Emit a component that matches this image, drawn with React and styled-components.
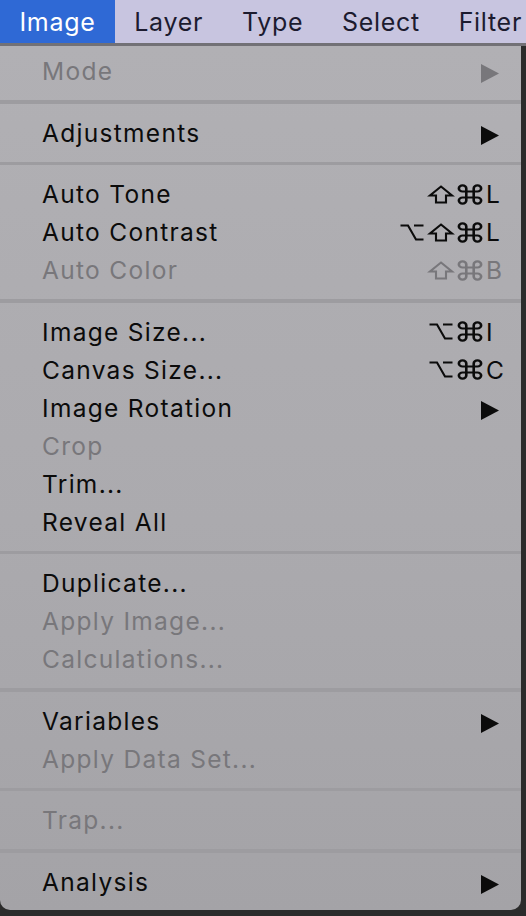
import React from 'react';
import styled, { createGlobalStyle } from 'styled-components';

const GlobalStyle = createGlobalStyle`
  html, body {
    margin: 0;
    padding: 0;
    background: #2b2b2b;
  }
  body {
    font-family: "Inter", "Liberation Sans", "DejaVu Sans", sans-serif;
    -webkit-font-smoothing: antialiased;
  }
`;

const Screen = styled.div`
  width: 526px;
  height: 916px;
  overflow: hidden;
  background: #2b2b2b;
  display: flex;
  flex-direction: column;
`;

const MenuBar = styled.div`
  height: 43px;
  flex: 0 0 auto;
  display: flex;
  align-items: stretch;
  background: #c8c5e0;
  border-bottom: 3px solid #727176;
  white-space: nowrap;
  overflow: hidden;
`;

const MenuTitle = styled.div`
  display: flex;
  align-items: center;
  padding: 0 19.4px;
  font-size: 25px;
  letter-spacing: 0.7px;
  color: ${p => (p.$active ? '#ffffff' : '#1c1b2f')};
  background: ${p => (p.$active ? '#2f69d5' : 'transparent')};
`;

const Panel = styled.div`
  width: 521px;
  padding: 6px 0 9px;
  background: linear-gradient(180deg, #b1b0b4 0%, #abaaae 55%, #a4a3a7 100%);
  border-radius: 0 0 10px 10px;
  box-sizing: border-box;
`;

const Row = styled.div`
  height: 38px;
  display: flex;
  align-items: center;
  padding: 0 18px 0 42px;
  font-size: 24.5px;
  letter-spacing: 1.3px;
  color: ${p => (p.$disabled ? '#78777b' : '#0b0b0b')};
`;

const Label = styled.span`
  flex: 1;
`;

const Shortcut = styled.span`
  display: flex;
  align-items: center;
  gap: 5px;
`;

const ModIcon = styled.svg`
  width: 24px;
  height: 19px;
  fill: none;
  stroke: currentColor;
  stroke-width: 2.1;
  stroke-linejoin: miter;
  overflow: visible;
`;

const Key = styled.span`
  width: 17px;
  margin-left: -1px;
  font-size: 24.5px;
  letter-spacing: 0;
`;

const Arrow = styled.svg`
  width: 18px;
  height: 19px;
  margin-right: 4px;
  margin-top: 5px;
  fill: currentColor;
`;

const Separator = styled.div`
  height: 3.5px;
  margin: 10px 0;
  background: #9d9ca0;
`;

const Option = () => (
  <ModIcon viewBox="0 0 24 18">
    <path d="M0.5 2 H8 L16 16 H23.5 M14 2 H23.5" />
  </ModIcon>
);

const Shift = () => (
  <ModIcon viewBox="0 0 24 18">
    <path d="M12 1 L23 10 H17 V17 H7 V10 H1 Z" />
  </ModIcon>
);

const Command = () => (
  <ModIcon viewBox="2.3 2.6 19.4 18.8" preserveAspectRatio="none">
    <path d="M15 6v12a3 3 0 1 0 3-3H6a3 3 0 1 0 3 3V6a3 3 0 1 0-3 3h12a3 3 0 1 0-3-3" />
  </ModIcon>
);

const modIcons = { opt: Option, shift: Shift, cmd: Command };

const items = [
  { label: 'Mode', disabled: true, sub: true },
  '-',
  { label: 'Adjustments', sub: true },
  '-',
  { label: 'Auto Tone', mods: ['shift', 'cmd'], key: 'L' },
  { label: 'Auto Contrast', mods: ['opt', 'shift', 'cmd'], key: 'L' },
  { label: 'Auto Color', mods: ['shift', 'cmd'], key: 'B', disabled: true },
  '-',
  { label: 'Image Size...', mods: ['opt', 'cmd'], key: 'I' },
  { label: 'Canvas Size...', mods: ['opt', 'cmd'], key: 'C' },
  { label: 'Image Rotation', sub: true },
  { label: 'Crop', disabled: true },
  { label: 'Trim...' },
  { label: 'Reveal All' },
  '-',
  { label: 'Duplicate...' },
  { label: 'Apply Image...', disabled: true },
  { label: 'Calculations...', disabled: true },
  '-',
  { label: 'Variables', sub: true },
  { label: 'Apply Data Set...', disabled: true },
  '-',
  { label: 'Trap...', disabled: true },
  '-',
  { label: 'Analysis', sub: true },
];

const titles = ['Image', 'Layer', 'Type', 'Select', 'Filter'];

const MenuItem = ({ item }) => (
  <Row $disabled={item.disabled}>
    <Label>{item.label}</Label>
    {item.key && (
      <Shortcut>
        {item.mods.map(m => {
          const Icon = modIcons[m];
          return <Icon key={m} />;
        })}
        <Key>{item.key}</Key>
      </Shortcut>
    )}
    {item.sub && (
      <Arrow viewBox="0 0 18 19">
        <path d="M0 0 L18 9.5 L0 19 Z" />
      </Arrow>
    )}
  </Row>
);

export default function App() {
  return (
    <Screen>
      <GlobalStyle />
      <MenuBar>
        {titles.map((t, i) => (
          <MenuTitle key={t} $active={i === 0}>
            {t}
          </MenuTitle>
        ))}
      </MenuBar>
      <Panel>
        {items.map((item, i) =>
          item === '-' ? <Separator key={i} /> : <MenuItem key={i} item={item} />
        )}
      </Panel>
    </Screen>
  );
}
